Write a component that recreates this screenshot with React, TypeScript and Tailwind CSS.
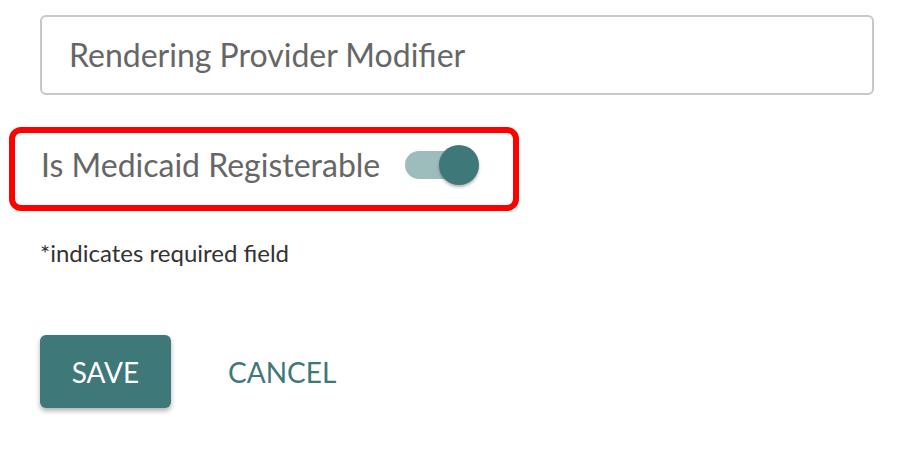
import React, { useState } from 'react';

export default function App() {
  const [medicaid, setMedicaid] = useState(true);

  return (
    <div className="w-[922px] h-[450px] bg-white pt-[15px] pl-[40px] font-['Lato',sans-serif]">
      {/* Text field */}
      <div className="w-[834px] h-[80px] border-2 border-[#c8c8c8] rounded-[6px] flex items-center pl-[27px] text-[32px] text-[#666666]">
        Rendering Provider Modifier
      </div>

      {/* Highlighted switch row */}
      <div className="ml-[-31px] mt-[32px] w-[510px] h-[84px] border-[6px] border-[#ff0000] rounded-[12px] flex items-center pl-[26px] pb-[8px]">
        <span className="text-[32px] text-[#666666] leading-none">Is Medicaid Registerable</span>
        <button
          type="button"
          onClick={() => setMedicaid(!medicaid)}
          className="relative ml-[25px] w-[74px] h-[40px] flex items-center"
        >
          <span className="block w-[68px] h-[28px] rounded-full bg-[#9dbdbc]" />
          <span
            className={
              medicaid
                ? 'absolute left-[34px] top-0 w-[40px] h-[40px] rounded-full bg-[#3e7878] shadow-[0_2px_3px_rgba(0,0,0,0.3)]'
                : 'absolute left-0 top-0 w-[40px] h-[40px] rounded-full bg-[#f5f5f5] shadow-[0_2px_3px_rgba(0,0,0,0.3)]'
            }
          />
        </button>
      </div>

      <p className="mt-[24px] text-[24px] leading-[36px] text-[#333333]">*indicates required field</p>

      {/* Actions */}
      <div className="mt-[64px] flex items-center gap-[57px]">
        <button className="w-[131px] h-[73px] rounded-[6px] bg-[#3e7878] text-white text-[28px] shadow-[0_3px_5px_rgba(0,0,0,0.3)]">
          SAVE
        </button>
        <button className="text-[28px] text-[#3e7878]">CANCEL</button>
      </div>
    </div>
  );
}
